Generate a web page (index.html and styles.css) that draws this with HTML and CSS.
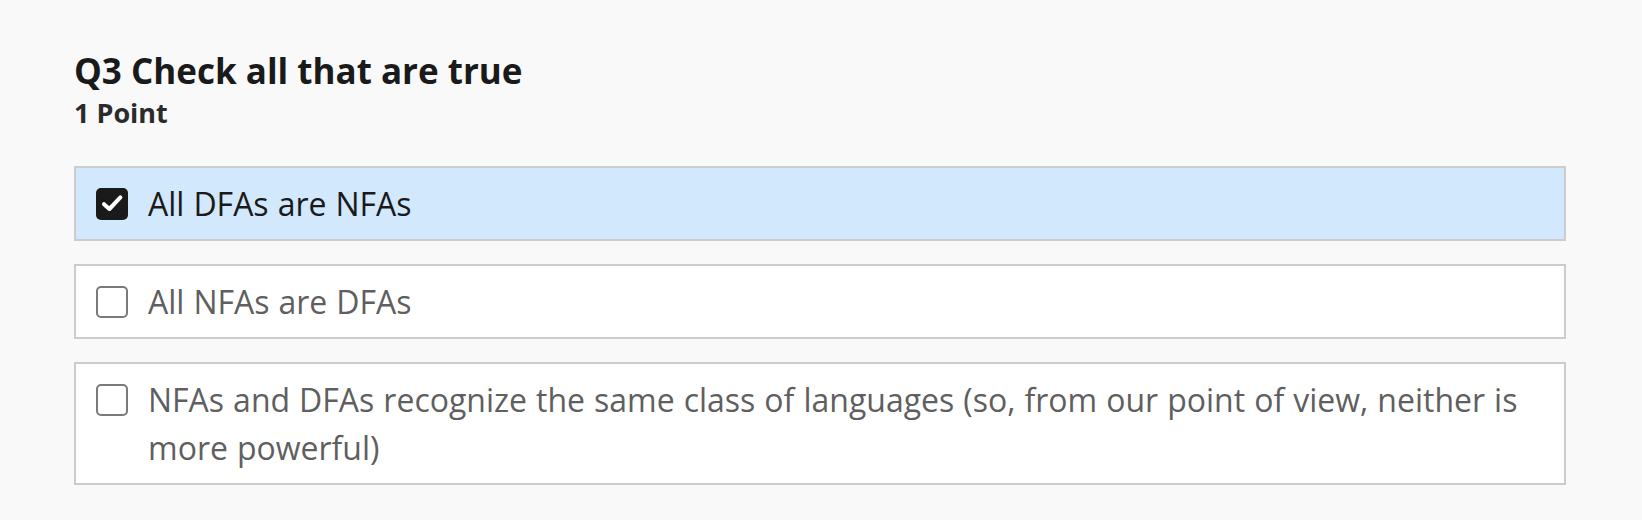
FILE: index.html
```html
<!DOCTYPE html>
<html lang="en">
<head>
    <meta charset="UTF-8">
    <meta name="viewport" content="width=device-width, initial-scale=1.0">
    <title>Q3 Check all that are true</title>
    <link rel="stylesheet" href="styles.css">
</head>
<body>
    <div class="question">
        <h2 class="question-title">Q3 Check all that are true</h2>
        <div class="question-points">1 Point</div>

        <!-- Opciones -->
        <ul class="options">
            <li class="option option-selected">
                <span class="checkbox checkbox-checked">
                    <svg width="32" height="32" viewBox="0 0 32 32">
                        <path d="M8 16.2 L13.4 21 L24.4 9.4" fill="none" stroke="#fff" stroke-width="4" stroke-linecap="round" stroke-linejoin="round"/>
                    </svg>
                </span>
                <span class="option-text">All DFAs are NFAs</span>
            </li>
            <li class="option">
                <span class="checkbox"></span>
                <span class="option-text">All NFAs are DFAs</span>
            </li>
            <li class="option">
                <span class="checkbox"></span>
                <span class="option-text">NFAs and DFAs recognize the same class of languages (so, from our point of view, neither is more powerful)</span>
            </li>
        </ul>
    </div>
</body>
</html>
```

FILE: styles.css
```css
body {
    margin: 0;
    padding: 51px 76px 0 74px;
    background-color: #f9f9f9;
    font-family: "Open Sans", Arial, sans-serif;
    color: #1a1a1a;
}
.question-title {
    margin: 0;
    font-size: 35px;
    line-height: 40px;
    font-weight: 700;
}
.question-points {
    margin-top: 4px;
    font-size: 27px;
    line-height: 36px;
    font-weight: 700;
    color: #2b2b2b;
}
.options {
    list-style-type: none;
    margin: 35px 0 0 0;
    padding: 0;
}
.option {
    display: flex;
    align-items: flex-start;
    gap: 20px;
    background-color: #fff;
    border: 2px solid #cccccc;
    padding: 12px 20px 11px 20px;
    margin-bottom: 23px;
    font-size: 32px;
    line-height: 48px;
    word-spacing: 0.7px;
    color: #5f5f5f;
}
.option-selected {
    background-color: #d2e8fc;
    color: #1a1a1a;
}
.checkbox {
    flex: none;
    box-sizing: border-box;
    width: 32px;
    height: 32px;
    margin-top: 8px;
    border: 2px solid #7a7a7a;
    border-radius: 5px;
    background-color: #fff;
}
.checkbox-checked {
    border: none;
    background-color: #1a1a1a;
}
.checkbox svg {
    display: block;
}
```
